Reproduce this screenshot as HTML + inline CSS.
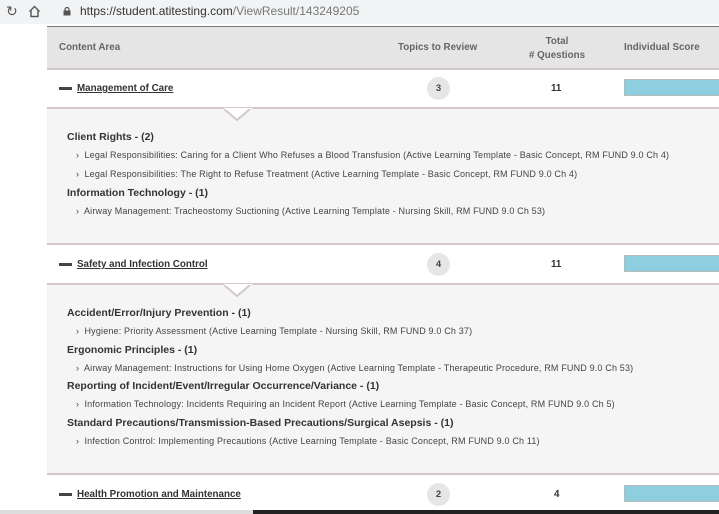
<!DOCTYPE html>
<html><head><meta charset="utf-8"><style>
*{margin:0;padding:0;box-sizing:border-box}
body{width:719px;height:514px;overflow:hidden;background:#fff;font-family:"Liberation Sans",Arial,sans-serif;position:relative;color:#333}
.a{position:absolute;white-space:nowrap}
.bar{left:0;top:0;width:719px;height:24px;background:#f1f3f4}
.hdr{left:47px;top:26px;width:672px;height:42px;background:#e5e5e5;border-top:1px solid #777}
.hb{left:47px;width:672px;height:2px;background:#d2c8cb}
.det{left:47px;width:672px;background:#f5f5f5}
.th{font-size:9.8px;font-weight:bold;color:#666}
.ct{font-size:9.8px;font-weight:bold;color:#333;text-decoration:underline}
.dash{width:13px;height:3px;background:#444;left:59px}
.circ{width:23px;height:23px;border-radius:50%;background:#e6e6e6;font-size:9.5px;font-weight:bold;text-align:center;line-height:23px;color:#444}
.num{font-size:9.8px;font-weight:bold;color:#333}
.sc{left:624px;width:95px;height:17px;background:#8ecfdf;border:1px solid #b9b9b9;border-right:none}
.h{font-size:10.5px;font-weight:bold;color:#333;left:67px}
.i{font-size:9px;color:#444;left:76px;letter-spacing:0.17px}
</style></head><body>
<div class="a bar"></div>
<div class="a" style="left:6px;top:3px;font-size:14px;color:#555">&#8635;</div>
<svg class="a" style="left:28px;top:5px" width="13" height="13" viewBox="0 0 13 13"><path d="M1.5 6.5L6.5 1.5L11.5 6.5M3 5.5V11.5H10V5.5" fill="none" stroke="#555" stroke-width="1.4"/></svg>
<svg class="a" style="left:63px;top:7px" width="8" height="9" viewBox="0 0 8 9"><rect x="0.5" y="3.5" width="7" height="5" fill="#555"/><path d="M2 4V2.5a2 2 0 0 1 4 0V4" fill="none" stroke="#555" stroke-width="1.2"/></svg>
<div class="a" style="left:80px;top:4px;font-size:12px;color:#333">https://student.atitesting.com<span style="color:#777">/ViewResult/143249205</span></div>

<div class="a hdr"></div>
<div class="a th" style="left:59px;top:42px">Content Area</div>
<div class="a th" style="left:398px;top:42px">Topics to Review</div>
<div class="a th" style="left:526px;top:35px;text-align:center;width:62px;line-height:14px">Total<br># Questions</div>
<div class="a th" style="left:624px;top:42px">Individual Score</div>
<div class="a hb" style="top:68px"></div>

<div class="a dash" style="top:87px"></div>
<div class="a ct" style="left:77px;top:83px">Management of Care</div>
<div class="a circ" style="left:427px;top:77px">3</div>
<div class="a num" style="left:551px;top:83px">11</div>
<div class="a sc" style="top:79px"></div>
<div class="a hb" style="top:107px"></div>
<div class="a det" style="top:109px;height:134px"></div>
<svg class="a" style="left:224px;top:108px" width="28" height="13"><path d="M0 1L13 12L26 1" fill="#fff" stroke="#d2c8cb" stroke-width="2"/><rect x="0" y="-1" width="28" height="2" fill="#fff"/></svg>
<div class="a h" style="top:131px">Client Rights - (2)</div>
<div class="a i" style="top:150px">›&nbsp; Legal Responsibilities: Caring for a Client Who Refuses a Blood Transfusion (Active Learning Template - Basic Concept, RM FUND 9.0 Ch 4)</div>
<div class="a i" style="top:169px">›&nbsp; Legal Responsibilities: The Right to Refuse Treatment (Active Learning Template - Basic Concept, RM FUND 9.0 Ch 4)</div>
<div class="a h" style="top:187px">Information Technology - (1)</div>
<div class="a i" style="top:206px">›&nbsp; Airway Management: Tracheostomy Suctioning (Active Learning Template - Nursing Skill, RM FUND 9.0 Ch 53)</div>
<div class="a hb" style="top:243px"></div>

<div class="a dash" style="top:263px"></div>
<div class="a ct" style="left:77px;top:259px">Safety and Infection Control</div>
<div class="a circ" style="left:427px;top:253px">4</div>
<div class="a num" style="left:551px;top:259px">11</div>
<div class="a sc" style="top:255px"></div>
<div class="a hb" style="top:283px"></div>
<div class="a det" style="top:285px;height:188px"></div>
<svg class="a" style="left:224px;top:284px" width="28" height="13"><path d="M0 1L13 12L26 1" fill="#fff" stroke="#d2c8cb" stroke-width="2"/><rect x="0" y="-1" width="28" height="2" fill="#fff"/></svg>
<div class="a h" style="top:307px">Accident/Error/Injury Prevention - (1)</div>
<div class="a i" style="top:326px">›&nbsp; Hygiene: Priority Assessment (Active Learning Template - Nursing Skill, RM FUND 9.0 Ch 37)</div>
<div class="a h" style="top:344px">Ergonomic Principles - (1)</div>
<div class="a i" style="top:363px">›&nbsp; Airway Management: Instructions for Using Home Oxygen (Active Learning Template - Therapeutic Procedure, RM FUND 9.0 Ch 53)</div>
<div class="a h" style="top:380px">Reporting of Incident/Event/Irregular Occurrence/Variance - (1)</div>
<div class="a i" style="top:399px">›&nbsp; Information Technology: Incidents Requiring an Incident Report (Active Learning Template - Basic Concept, RM FUND 9.0 Ch 5)</div>
<div class="a h" style="top:417px">Standard Precautions/Transmission-Based Precautions/Surgical Asepsis - (1)</div>
<div class="a i" style="top:436px">›&nbsp; Infection Control: Implementing Precautions (Active Learning Template - Basic Concept, RM FUND 9.0 Ch 11)</div>
<div class="a hb" style="top:473px"></div>

<div class="a dash" style="top:493px"></div>
<div class="a ct" style="left:77px;top:489px">Health Promotion and Maintenance</div>
<div class="a circ" style="left:427px;top:483px">2</div>
<div class="a num" style="left:554px;top:489px">4</div>
<div class="a sc" style="top:485px"></div>
<div class="a" style="left:0;top:510px;width:253px;height:4px;background:#ddd"></div>
<div class="a" style="left:253px;top:510px;width:466px;height:4px;background:#222"></div>
</body></html>
